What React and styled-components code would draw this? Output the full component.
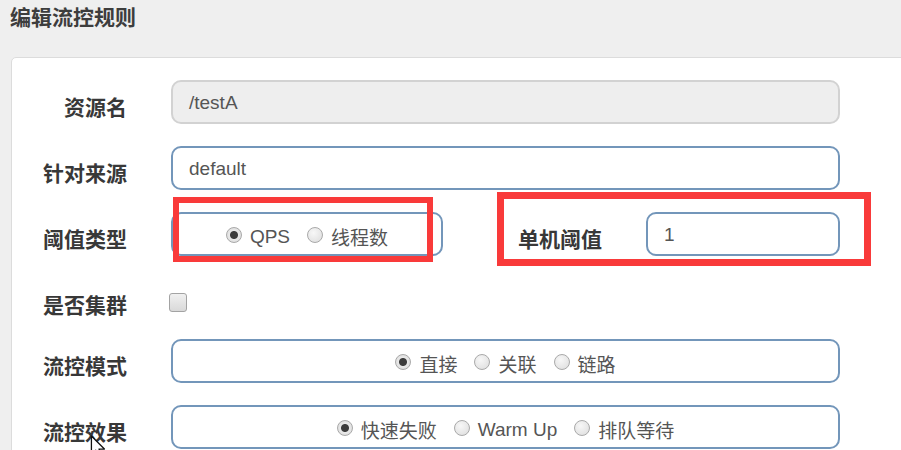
import React from 'react';
import styled, { createGlobalStyle } from 'styled-components';

const GlobalStyle = createGlobalStyle`
  html, body {
    margin: 0;
    padding: 0;
    background: #efefef;
    overflow: hidden;
  }
  body {
    font-family: "Liberation Sans", "Noto Sans CJK SC", sans-serif;
  }
`;

const Page = styled.div`
  position: relative;
  width: 901px;
  height: 450px;
  overflow: hidden;
`;

const Header = styled.div`
  height: 57px;
  box-sizing: border-box;
  padding: 2px 0 0 10px;
`;

const Title = styled.h3`
  margin: 0;
  font-family: "Noto Sans CJK SC", sans-serif;
  font-size: 21px;
  line-height: 28px;
  font-weight: 700;
  color: #3d3d3d;
`;

const Card = styled.div`
  margin-left: 11px;
  width: 1000px;
  background: #fff;
  border: 1px solid #dcdcdc;
  border-radius: 5px 0 0 0;
  padding-top: 22px;
  height: 500px;
  box-sizing: border-box;
`;

const Row = styled.div`
  position: relative;
  display: flex;
  align-items: center;
  height: 44px;
  margin-top: ${p => p.$mt || 0}px;
  margin-bottom: ${p => (p.$mb === undefined ? 22 : p.$mb)}px;
`;

const Label = styled.label`
  width: ${p => p.$w || 115}px;
  margin-left: ${p => p.$ml || 0}px;
  margin-right: 44px;
  padding-top: 8px;
  text-align: right;
  white-space: nowrap;
  font-family: "Noto Sans CJK SC", sans-serif;
  font-size: 21px;
  font-weight: 700;
  color: #383838;
`;

const Input = styled.div`
  box-sizing: border-box;
  width: ${p => p.$w || 669}px;
  height: 44px;
  display: flex;
  align-items: center;
  padding: 2px 0 0 16px;
  border: 2px solid ${p => (p.$disabled ? '#d2d2d2' : '#7396ba')};
  border-radius: 10px;
  background: ${p => (p.$disabled ? '#eeeeee' : '#fff')};
  font-size: 19px;
  color: #555;
`;

const Group = styled.div`
  box-sizing: border-box;
  width: ${p => p.$w || 669}px;
  height: 44px;
  display: flex;
  align-items: center;
  justify-content: center;
  gap: 17px;
  padding-top: 5px;
  border: 2px solid #7396ba;
  border-radius: 10px;
  background: #fff;
`;

const Option = styled.span`
  display: flex;
  align-items: center;
  gap: 8px;
  font-family: "Liberation Sans", "Noto Sans CJK SC", sans-serif;
  font-size: 19px;
  color: #555;
`;

const Dot = styled.span`
  box-sizing: border-box;
  width: 16px;
  height: 16px;
  margin-top: -3px;
  border-radius: 50%;
  border: 1px solid #a9a9a9;
  background: ${p =>
    p.$on
      ? 'radial-gradient(circle, #3c3c3c 0 3.5px, #e9e9e9 4.5px, #d6d6d6 100%)'
      : 'radial-gradient(circle at 40% 35%, #f7f7f7 0, #dcdcdc 100%)'};
`;

const Check = styled.span`
  box-sizing: border-box;
  display: block;
  width: 18px;
  height: 19px;
  margin: 4px 0 0 -2px;
  border: 1px solid #a3a3a3;
  border-radius: 3px;
  background: linear-gradient(#f0f0f0, #d9d9d9);
`;

const Mark = styled.div`
  position: absolute;
  left: ${p => p.$x}px;
  top: ${p => p.$y}px;
  width: ${p => p.$w}px;
  height: ${p => p.$h}px;
  box-sizing: border-box;
  border: ${p => p.$b}px solid #f93a3a;
  pointer-events: none;
`;

const Cursor = styled.svg`
  position: absolute;
  left: 90px;
  top: 435px;
`;

const Radio = ({ on, children }) => (
  <Option>
    <Dot $on={on} />
    {children}
  </Option>
);

export default function App() {
  return (
    <Page>
      <GlobalStyle />
      <Header>
        <Title>编辑流控规则</Title>
      </Header>
      <Card>
        <Row>
          <Label>资源名</Label>
          <Input $disabled>/testA</Input>
        </Row>
        <Row>
          <Label>针对来源</Label>
          <Input>default</Input>
        </Row>
        <Row>
          <Label>阈值类型</Label>
          <Group $w={272}>
            <Radio on>QPS</Radio>
            <Radio>线程数</Radio>
          </Group>
          <Label $w={85} $ml={74}>单机阈值</Label>
          <Input $w={194}>1</Input>
          <Mark $x={161} $y={-15} $w={260} $h={65} $b={6} />
          <Mark $x={485} $y={-20} $w={374} $h={74} $b={7} />
        </Row>
        <Row $mt={4} $mb={17}>
          <Label>是否集群</Label>
          <Check />
        </Row>
        <Row>
          <Label>流控模式</Label>
          <Group>
            <Radio on>直接</Radio>
            <Radio>关联</Radio>
            <Radio>链路</Radio>
          </Group>
        </Row>
        <Row>
          <Label>流控效果</Label>
          <Group>
            <Radio on>快速失败</Radio>
            <Radio>Warm Up</Radio>
            <Radio>排队等待</Radio>
          </Group>
        </Row>
      </Card>
      <Cursor width="18" height="26" viewBox="0 0 16 24">
        <path d="M1 1 L1 18 L5 14 L8 21 L11 20 L8 13 L13 13 Z" fill="#fff" stroke="#111" strokeWidth="1.2" strokeLinejoin="round" />
      </Cursor>
    </Page>
  );
}
